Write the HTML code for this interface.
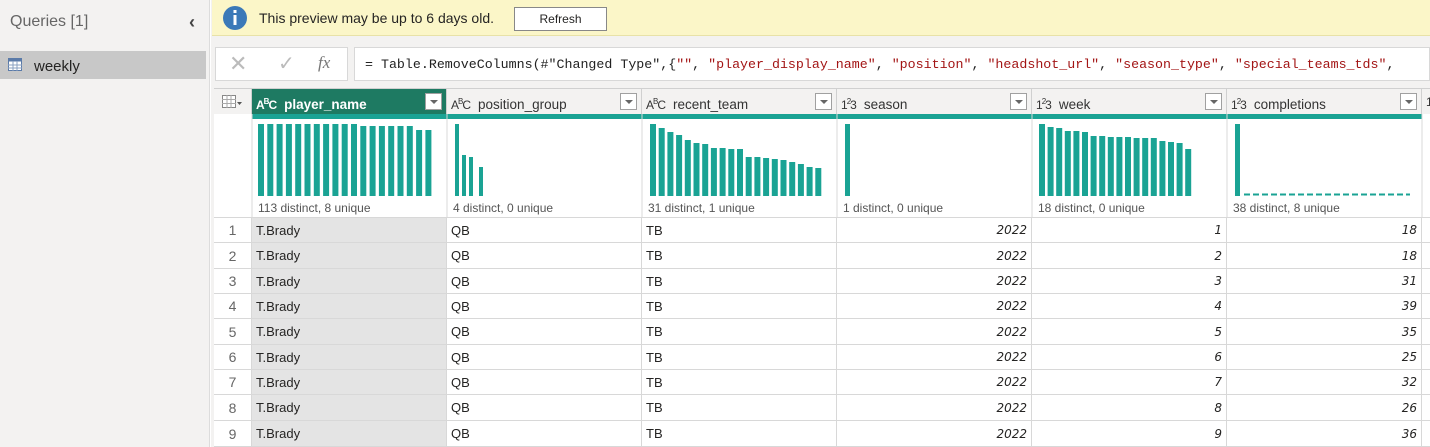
<!DOCTYPE html>
<html><head><meta charset="utf-8"><style>
*{margin:0;padding:0;box-sizing:border-box}
body{width:1430px;height:447px;overflow:hidden;background:#fff;font-family:"Liberation Sans",sans-serif;position:relative;color:#252423}
.a{position:absolute}
.left{left:0;top:0;width:210px;height:447px;background:#f3f2f1;border-right:1px solid #dcdcdc}
.main{left:211px;top:0;width:1219px;height:447px;background:#f3f2f1}
.yb{left:212px;top:0;width:1218px;height:36px;background:#fbf6c8;border-bottom:1px solid #e8e2a8}
.hd{top:89px;height:25px;background:#f3f2f1;border-right:1px solid #d0d0d0;font-size:13.5px;line-height:25px;color:#333}
.dd{position:absolute;right:4px;top:4px;width:17px;height:17px;border:1px solid #a0a0a0;background:#fff}
.dd:after{content:"";position:absolute;left:4px;top:6px;border-left:4px solid transparent;border-right:4px solid transparent;border-top:4px solid #666}
.ty{font-size:12px;margin-left:4px;margin-right:8px;letter-spacing:-1px}
.r{position:absolute;left:214px;width:1216px;border-bottom:1px solid #d8d8d8;font-size:13px}
.r div{position:absolute;top:0;bottom:0;border-right:1px solid #d8d8d8;padding:0 4px;display:flex;align-items:center}
.c0{left:0;width:38px;justify-content:center;color:#666;font-size:14px}
.c1{left:38px;width:195px;background:#e4e4e4}
.c2{left:233px;width:195px}.c3{left:428px;width:195px}
.c4{left:623px;width:195px}.c5{left:818px;width:195px}.c6{left:1013px;width:195px}
.n{justify-content:flex-end;font-style:italic;font-family:"DejaVu Sans",sans-serif;font-size:12px}
</style></head><body>
<div class="a left">
<div class="a" style="left:10px;top:13px;font-size:16px;color:#666">Queries [1]</div>
<div class="a" style="left:189px;top:12px;font-size:18px;color:#444;font-weight:bold">&#8249;</div>
<div class="a" style="left:0;top:51px;width:206px;height:28px;background:#c8c8c8"></div>
<svg class="a" style="left:8px;top:58px" width="14" height="13"><rect x=".5" y=".5" width="13" height="12" fill="#fff" stroke="#5a7aa8"/><rect x=".5" y=".5" width="13" height="3" fill="#5a7aa8"/><path d="M0 7H14M0 10H14M5 3V13M9 3V13" stroke="#8aa0c0"/></svg>
<div class="a" style="left:34px;top:58px;font-size:15px">weekly</div>
</div>
<div class="a main"></div>
<div class="a yb">
<svg class="a" style="left:10px;top:5px" width="26" height="26"><circle cx="13" cy="13" r="12" fill="#3b79b8"/><rect x="11.5" y="10" width="3" height="10" fill="#fff"/><rect x="11.5" y="5" width="3" height="3" fill="#fff"/></svg>
<div class="a" style="left:47px;top:10px;font-size:14px">This preview may be up to 6 days old.</div>
<div class="a" style="left:302px;top:7px;width:93px;height:24px;background:#fff;border:1px solid #888;font-size:12px;text-align:center;line-height:22px">Refresh</div>
</div>
<div class="a" style="left:215px;top:47px;width:133px;height:34px;background:#fff;border:1px solid #d8d8d8"></div>
<div class="a" style="left:229px;top:51px;font-size:22px;color:#bbb">&#10005;</div>
<div class="a" style="left:278px;top:51px;font-size:20px;color:#bbb">&#10003;</div>
<div class="a" style="left:318px;top:53px;font-size:17px;color:#777;font-style:italic;font-family:'Liberation Serif',serif">fx</div>
<div class="a" style="left:354px;top:47px;width:1076px;height:34px;background:#fff;border:1px solid #d8d8d8;font-family:'Liberation Mono',monospace;font-size:13.3px;line-height:33px;padding-left:10px;white-space:nowrap;color:#222">= Table.RemoveColumns(#"Changed Type",{<span style="color:#a31515">""</span>, <span style="color:#a31515">"player_display_name"</span>, <span style="color:#a31515">"position"</span>, <span style="color:#a31515">"headshot_url"</span>, <span style="color:#a31515">"season_type"</span>, <span style="color:#a31515">"special_teams_tds"</span>,</div>

<div class="a" style="left:214px;top:88px;width:1216px;height:359px;background:#fff;border-top:1px solid #d0d0d0"></div>
<div class="a hd" style="left:214px;width:38px"><svg style="margin:6px 0 0 8px" width="20" height="13"><rect x=".5" y=".5" width="13" height="12" fill="#fff" stroke="#888"/><path d="M0 4.5H14M0 8.5H14M5 0V13M9 0V13" stroke="#aaa"/><path d="M15 7h5l-2.5 3z" fill="#555"/></svg></div>
<div class="a hd" style="left:252px;width:195px;background:#1e7a62;color:#fff;font-weight:bold"><span class="ty">A<sup style="font-size:8px">B</sup>C</span>player_name<div class="dd"></div></div>
<div class="a hd" style="left:447px;width:195px"><span class="ty">A<sup style="font-size:8px">B</sup>C</span>position_group<div class="dd"></div></div>
<div class="a hd" style="left:642px;width:195px"><span class="ty">A<sup style="font-size:8px">B</sup>C</span>recent_team<div class="dd"></div></div>
<div class="a hd" style="left:837px;width:195px"><span class="ty">1<sup style="font-size:8px">2</sup>3</span>season<div class="dd"></div></div>
<div class="a hd" style="left:1032px;width:195px"><span class="ty">1<sup style="font-size:8px">2</sup>3</span>week<div class="dd"></div></div>
<div class="a hd" style="left:1227px;width:195px"><span class="ty">1<sup style="font-size:8px">2</sup>3</span>completions<div class="dd"></div></div>
<div class="a hd" style="left:1422px;width:10px"><span class="ty">1</span></div>

<svg class="a" style="left:214px;top:114px" width="1216" height="104">
<rect x="38" y="0" width="1170" height="5" fill="#1aa394"/>
<path d="M38 0V104M233 0V104M428 0V104M623 0V104M818 0V104M1013 0V104M1208 0V104M0 103.5H1216" stroke="#d8d8d8"/>
<g fill="#1aa394">
<rect x="44" y="10" width="6" height="72"/><rect x="53.3" y="10" width="6" height="72"/><rect x="62.6" y="10" width="6" height="72"/><rect x="71.9" y="10" width="6" height="72"/><rect x="81.2" y="10" width="6" height="72"/><rect x="90.5" y="10" width="6" height="72"/><rect x="99.8" y="10" width="6" height="72"/><rect x="109.1" y="10" width="6" height="72"/><rect x="118.4" y="10" width="6" height="72"/><rect x="127.7" y="10" width="6" height="72"/><rect x="137" y="10" width="6" height="72"/><rect x="146.3" y="12" width="6" height="70"/><rect x="155.6" y="12" width="6" height="70"/><rect x="164.9" y="12" width="6" height="70"/><rect x="174.2" y="12" width="6" height="70"/><rect x="183.5" y="12" width="6" height="70"/><rect x="192.8" y="12" width="6" height="70"/><rect x="202.1" y="16" width="6" height="66"/><rect x="211.4" y="16" width="6" height="66"/>
<rect x="241" y="10" width="4" height="72"/><rect x="248" y="41" width="4" height="41"/><rect x="255" y="43" width="4" height="39"/><rect x="265" y="53" width="4" height="29"/>
<rect x="436" y="10" width="6" height="72"/><rect x="444.7" y="14" width="6" height="68"/><rect x="453.4" y="18" width="6" height="64"/><rect x="462.1" y="21" width="6" height="61"/><rect x="470.8" y="26" width="6" height="56"/><rect x="479.5" y="29" width="6" height="53"/><rect x="488.2" y="30" width="6" height="52"/><rect x="496.9" y="34" width="6" height="48"/><rect x="505.6" y="34" width="6" height="48"/><rect x="514.3" y="35" width="6" height="47"/><rect x="523" y="35" width="6" height="47"/><rect x="531.7" y="43" width="6" height="39"/><rect x="540.4" y="43" width="6" height="39"/><rect x="549.1" y="44" width="6" height="38"/><rect x="557.8" y="45" width="6" height="37"/><rect x="566.5" y="46" width="6" height="36"/><rect x="575.2" y="48" width="6" height="34"/><rect x="583.9" y="50" width="6" height="32"/><rect x="592.6" y="53" width="6" height="29"/><rect x="601.3" y="54" width="6" height="28"/>
<rect x="631" y="10" width="5" height="72"/>
<rect x="825" y="10" width="6" height="72"/><rect x="833.6" y="13" width="6" height="69"/><rect x="842.2" y="14" width="6" height="68"/><rect x="850.8" y="17" width="6" height="65"/><rect x="859.4" y="17" width="6" height="65"/><rect x="868" y="18" width="6" height="64"/><rect x="876.6" y="22" width="6" height="60"/><rect x="885.2" y="22" width="6" height="60"/><rect x="893.8" y="23" width="6" height="59"/><rect x="902.4" y="23" width="6" height="59"/><rect x="911" y="23" width="6" height="59"/><rect x="919.6" y="24" width="6" height="58"/><rect x="928.2" y="24" width="6" height="58"/><rect x="936.8" y="24" width="6" height="58"/><rect x="945.4" y="27" width="6" height="55"/><rect x="954" y="28" width="6" height="54"/><rect x="962.6" y="29" width="6" height="53"/><rect x="971.2" y="35" width="6" height="47"/>
<rect x="1021" y="10" width="5" height="72"/>
</g>
<path d="M1030 80.5H1196" stroke="#1aa394" stroke-width="2" stroke-dasharray="6 3"/>
<g font-size="12" fill="#555" font-family="Liberation Sans,sans-serif">
<text x="44" y="98">113 distinct, 8 unique</text><text x="239" y="98">4 distinct, 0 unique</text><text x="434" y="98">31 distinct, 1 unique</text><text x="629" y="98">1 distinct, 0 unique</text><text x="824" y="98">18 distinct, 0 unique</text><text x="1019" y="98">38 distinct, 8 unique</text>
</g>
</svg>

<div class="r" style="top:218px;height:25px"><div class="c0">1</div><div class="c1">T.Brady</div><div class="c2">QB</div><div class="c3">TB</div><div class="c4 n">2022</div><div class="c5 n">1</div><div class="c6 n">18</div></div>
<div class="r" style="top:243px;height:26px"><div class="c0">2</div><div class="c1">T.Brady</div><div class="c2">QB</div><div class="c3">TB</div><div class="c4 n">2022</div><div class="c5 n">2</div><div class="c6 n">18</div></div>
<div class="r" style="top:269px;height:25px"><div class="c0">3</div><div class="c1">T.Brady</div><div class="c2">QB</div><div class="c3">TB</div><div class="c4 n">2022</div><div class="c5 n">3</div><div class="c6 n">31</div></div>
<div class="r" style="top:294px;height:25px"><div class="c0">4</div><div class="c1">T.Brady</div><div class="c2">QB</div><div class="c3">TB</div><div class="c4 n">2022</div><div class="c5 n">4</div><div class="c6 n">39</div></div>
<div class="r" style="top:319px;height:26px"><div class="c0">5</div><div class="c1">T.Brady</div><div class="c2">QB</div><div class="c3">TB</div><div class="c4 n">2022</div><div class="c5 n">5</div><div class="c6 n">35</div></div>
<div class="r" style="top:345px;height:25px"><div class="c0">6</div><div class="c1">T.Brady</div><div class="c2">QB</div><div class="c3">TB</div><div class="c4 n">2022</div><div class="c5 n">6</div><div class="c6 n">25</div></div>
<div class="r" style="top:370px;height:25px"><div class="c0">7</div><div class="c1">T.Brady</div><div class="c2">QB</div><div class="c3">TB</div><div class="c4 n">2022</div><div class="c5 n">7</div><div class="c6 n">32</div></div>
<div class="r" style="top:395px;height:26px"><div class="c0">8</div><div class="c1">T.Brady</div><div class="c2">QB</div><div class="c3">TB</div><div class="c4 n">2022</div><div class="c5 n">8</div><div class="c6 n">26</div></div>
<div class="r" style="top:421px;height:26px"><div class="c0">9</div><div class="c1">T.Brady</div><div class="c2">QB</div><div class="c3">TB</div><div class="c4 n">2022</div><div class="c5 n">9</div><div class="c6 n">36</div></div>
</body></html>
